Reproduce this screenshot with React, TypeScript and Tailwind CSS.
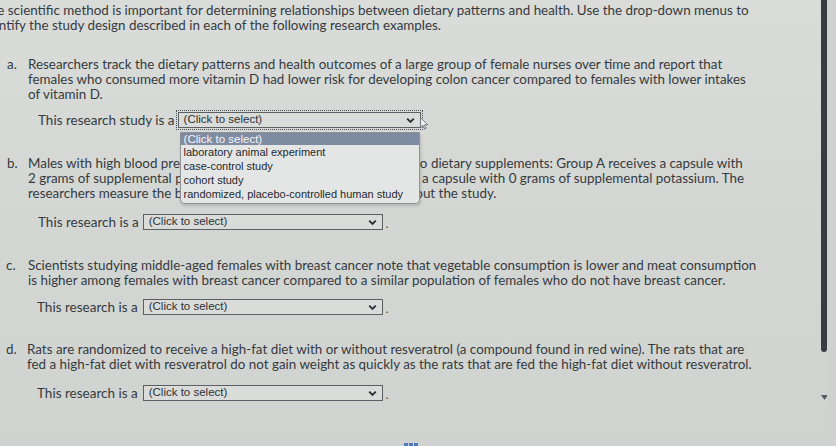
import React from "react";

const Chevron = () => (
  <svg width="9" height="7" viewBox="0 0 9 7" className="shrink-0">
    <path d="M1.2 1.6 L4.5 4.9 L7.8 1.6" fill="none" stroke="#2d3136" strokeWidth="1.9" />
  </svg>
);

function Select({ wide = false }: { wide?: boolean }) {
  return (
    <div
      className={`flex h-[16px] items-center justify-between border border-[#5b6065] bg-[#d9dcd9] pl-[5px] pr-[5px] ${
        wide ? "w-[243px]" : "w-[240px]"
      }`}
    >
      <span className="text-[11.5px] leading-none text-[#2e3237] [font-family:'Liberation_Sans',Arial,sans-serif]">
        (Click to select)
      </span>
      <Chevron />
    </div>
  );
}

const options = [
  "laboratory animal experiment",
  "case-control study",
  "cohort study",
  "randomized, placebo-controlled human study",
];

export default function App() {
  return (
    <div className="flex h-[446px] w-[836px] overflow-hidden bg-linear-to-b from-[#d9dcd8] via-[#d3d6d2] to-[#d0d4d0]">
      <div className="relative w-[821px] pt-[3px] text-[13.4px] leading-[15px] text-[#363a3f] [font-family:Lato,'Noto_Sans',sans-serif]">
        {/* intro */}
        <p className="-ml-[18px] whitespace-nowrap">
          The scientific method is important for determining relationships between dietary patterns and health. Use the drop-down menus to
          <br />
          <span className="-ml-[1px]">identify the study design described in each of the following research examples.</span>
        </p>

        {/* a */}
        <div className="mt-[24px] flex pl-[7px]">
          <span className="w-[21px] shrink-0">a.</span>
          <p className="whitespace-nowrap">
            Researchers track the dietary patterns and health outcomes of a large group of female nurses over time and report that
            <br />
            females who consumed more vitamin D had lower risk for developing colon cancer compared to females with lower intakes
            <br />
            of vitamin D.
          </p>
        </div>
        <div className="mt-[8px] flex items-center pl-[38px]">
          <span className="text-[13.5px]">This research study is a</span>
          <div className="relative ml-[1px] border border-dotted border-[#4a4f55] p-[1px]">
            <Select wide />
            {/* open list */}
            <div className="absolute left-[3px] top-[21px] z-10 w-[240px] rounded-b-[4px] border border-[#8e9398] bg-[#e3e6e4] pb-[2px] shadow-[1px_2px_3px_rgba(0,0,0,0.15)] [font-family:'Liberation_Sans',Arial,sans-serif]">
              <div className="h-[12px] bg-[#7f8ba0] pl-[3px] text-[11.5px] leading-[12px] text-[#f4f6fa]">(Click to select)</div>
              {options.map((o) => (
                <div key={o} className="h-[14px] pl-[3px] text-[11px] leading-[14px] text-[#25292e]">
                  {o}
                </div>
              ))}
            </div>
            {/* mouse cursor */}
            <svg className="absolute -right-[7px] top-[6px] z-20" width="9" height="13" viewBox="0 0 9 13">
              <path d="M0.6 0.6 L0.6 10.5 L3 8.3 L4.6 12 L6 11.4 L4.5 7.8 L7.8 7.8 Z" fill="#eef0f2" stroke="#6b7075" strokeWidth="0.9" />
            </svg>
          </div>
        </div>

        {/* b */}
        <div className="mt-[26px] flex pl-[7px]">
          <span className="w-[21px] shrink-0">b.</span>
          <p className="whitespace-nowrap">
            Males with high blood pressure are randomly assigned to one of two dietary supplements: Group A receives a capsule with
            <br />
            2 grams of supplemental potassium each day and Group B receives a capsule with 0 grams of supplemental potassium. The
            <br />
            researchers measure the blood pressure of all participants throughout the study.
          </p>
        </div>
        <div className="mt-[13px] flex items-center pl-[38px]">
          <span className="text-[13.5px]">This research is a</span>
          <div className="ml-[4px]">
            <Select />
          </div>
          <span className="ml-[3px] self-end text-[11px] leading-[13px]">.</span>
        </div>

        {/* c */}
        <div className="mt-[28px] flex pl-[6px]">
          <span className="w-[22px] shrink-0">c.</span>
          <p className="whitespace-nowrap">
            Scientists studying middle-aged females with breast cancer note that vegetable consumption is lower and meat consumption
            <br />
            is higher among females with breast cancer compared to a similar population of females who do not have breast cancer.
          </p>
        </div>
        <div className="mt-[11px] flex items-center pl-[37px]">
          <span className="text-[13.5px]">This research is a</span>
          <div className="ml-[5px]">
            <Select />
          </div>
          <span className="ml-[3px] self-end text-[11px] leading-[13px]">.</span>
        </div>

        {/* d */}
        <div className="mt-[27px] flex pl-[6px]">
          <span className="w-[21px] shrink-0">d.</span>
          <p className="whitespace-nowrap">
            Rats are randomized to receive a high-fat diet with or without resveratrol (a compound found in red wine). The rats that are
            <br />
            fed a high-fat diet with resveratrol do not gain weight as quickly as the rats that are fed the high-fat diet without resveratrol.
          </p>
        </div>
        <div className="mt-[13px] flex items-center pl-[37px]">
          <span className="text-[13.5px]">This research is a</span>
          <div className="ml-[5px]">
            <Select />
          </div>
          <span className="ml-[3px] self-end text-[11px] leading-[13px]">.</span>
        </div>

        {/* bottom blue mark */}
        <div className="absolute bottom-0 left-[404px] flex gap-[1px]">
          <span className="h-[3px] w-[4px] bg-[#4f79c0]" />
          <span className="h-[3px] w-[4px] bg-[#4f79c0]" />
          <span className="h-[3px] w-[4px] bg-[#4f79c0]" />
        </div>
      </div>

      {/* scrollbar */}
      <div className="flex w-[6px] flex-col items-center">
        <div className="h-[352px] w-[6px] rounded-b-[3px] bg-[#383c42]" />
        <svg className="mt-[43px]" width="7" height="5" viewBox="0 0 7 5">
          <path d="M0 0 L7 0 L3.5 5 Z" fill="#5a5e63" />
        </svg>
      </div>
      <div className="flex-1 bg-[#cfd2ce]" />
    </div>
  );
}
